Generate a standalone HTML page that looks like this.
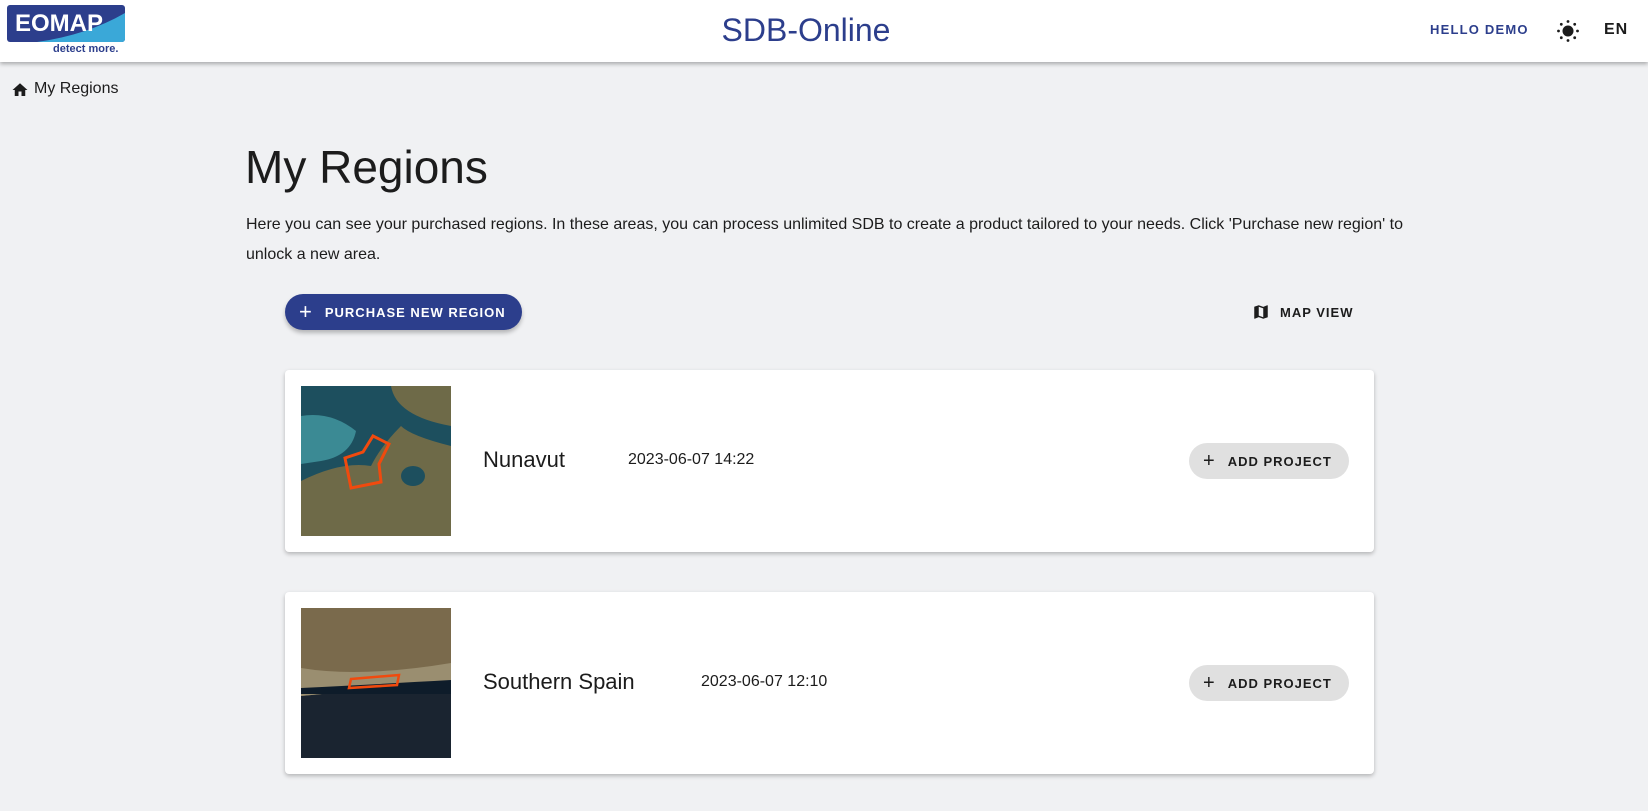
<!DOCTYPE html>
<html><head><meta charset="utf-8"><style>
*{box-sizing:border-box;margin:0;padding:0}
body{width:1648px;height:811px;overflow:hidden;background:#f0f1f3;font-family:"Liberation Sans",Roboto,sans-serif;color:#1c1c1c;position:relative}
.hdr{position:absolute;left:0;top:0;width:1648px;height:62px;background:#fff;box-shadow:0 2px 4px rgba(0,0,0,.3)}
.abs{position:absolute;white-space:nowrap}
.btn{position:absolute;border-radius:18px;font-weight:bold;font-size:13px;letter-spacing:1px;display:flex;align-items:center;white-space:nowrap}
.card{position:absolute;left:285px;width:1089px;height:182px;background:#fff;border-radius:4px;box-shadow:0 2px 4px rgba(0,0,0,.25)}
.add{background:#e0e0e0;color:#1c1c1c;left:904px;top:73px;width:160px;height:36px;padding-left:14px}
</style></head><body>
<div class="hdr">
 <div class="abs" style="left:7px;top:5px;width:118px;height:37px;background:#2c3e8c;border-radius:3px;overflow:hidden">
  <svg width="118" height="37" style="position:absolute;left:0;top:0"><path d="M30 37 Q80 30 118 8 L118 37Z" fill="#3aa8d8"/></svg>
  <div class="abs" style="left:8px;top:5px;color:#fff;font-weight:bold;font-size:24px;letter-spacing:0px;line-height:28px">EOMAP</div>
 </div>
 <div class="abs" style="left:53px;top:43px;font-size:11px;color:#2c3e8c;font-weight:bold">detect more.</div>
 <div class="abs" style="left:0;width:1612px;top:12px;text-align:center;font-size:32px;color:#2c3e8c">SDB-Online</div>
 <div class="abs" style="left:1430px;top:22px;font-size:13px;font-weight:bold;letter-spacing:1.2px;color:#2c3e8c">HELLO DEMO</div>
 <svg class="abs" style="left:1556px;top:19px" width="24" height="24" viewBox="0 0 24 24"><circle cx="12" cy="12" r="5.5" fill="#1c1c1c"/><g fill="#1c1c1c"><circle cx="12" cy="2.5" r="1.4"/><circle cx="12" cy="21.5" r="1.4"/><circle cx="2.5" cy="12" r="1.4"/><circle cx="21.5" cy="12" r="1.4"/><circle cx="5.3" cy="5.3" r="1.4"/><circle cx="18.7" cy="18.7" r="1.4"/><circle cx="5.3" cy="18.7" r="1.4"/><circle cx="18.7" cy="5.3" r="1.4"/></g></svg>
 <div class="abs" style="left:1604px;top:21px;font-size:16px;font-weight:bold;letter-spacing:1px">EN</div>
</div>
<svg class="abs" style="left:11px;top:81px" width="18" height="18" viewBox="0 0 24 24"><path d="M10 20v-6h4v6h5v-8h3L12 3 2 12h3v8z" fill="#1c1c1c"/></svg>
<div class="abs" style="left:34px;top:80px;font-size:16px">My Regions</div>
<div class="abs" style="left:245px;top:140px;font-size:46px">My Regions</div>
<div class="abs" style="left:246px;top:210px;width:1200px;font-size:16px;line-height:30px;white-space:normal">Here you can see your purchased regions. In these areas, you can process unlimited SDB to create a product tailored to your needs. Click 'Purchase new region' to unlock a new area.</div>
<div class="btn" style="left:285px;top:294px;width:237px;height:36px;background:#2c3e8c;color:#fff;padding-left:14px;box-shadow:0 3px 4px rgba(0,0,0,.25)"><span style="font-size:22px;font-weight:normal;margin-right:12px">+</span>PURCHASE NEW REGION</div>
<div class="btn" style="left:1252px;top:294px;height:36px"><svg width="18" height="18" viewBox="0 0 24 24" style="margin-right:10px"><path d="M20.5 3l-.16.03L15 5.1 9 3 3.36 4.9c-.21.07-.36.25-.36.48V20.5c0 .28.22.5.5.5l.16-.03L9 18.9l6 2.1 5.64-1.9c.21-.07.36-.25.36-.48V3.5c0-.28-.22-.5-.5-.5zM15 19l-6-2.11V5l6 2.11V19z" fill="#1c1c1c"/></svg>MAP VIEW</div>
<div class="card" style="top:370px">
 <svg class="abs" style="left:16px;top:16px" width="150" height="150" viewBox="0 0 150 150">
  <rect width="150" height="150" fill="#6e6a48"/>
  <path d="M0 0H90Q95 30 150 40V60Q110 50 100 40Q80 60 70 80Q40 75 0 95Z" fill="#1d4f5e"/>
  <path d="M0 30Q30 25 55 45Q50 70 20 75L0 78Z" fill="#3b8a94"/>
  <ellipse cx="112" cy="90" rx="12" ry="10" fill="#1d4f5e"/>
  <path d="M62 66L72 50L88 58L78 78L80 96L50 102L44 72Z" fill="none" stroke="#f04a0e" stroke-width="3"/>
 </svg>
 <div class="abs" style="left:198px;top:77px;font-size:22px">Nunavut</div>
 <div class="abs" style="left:343px;top:81px;font-size:16px">2023-06-07 14:22</div>
 <div class="btn add"><span style="font-size:20px;font-weight:normal;margin-right:12px">+</span>ADD PROJECT</div>
</div>
<div class="card" style="top:592px">
 <svg class="abs" style="left:16px;top:16px" width="150" height="150" viewBox="0 0 150 150">
  <rect width="150" height="150" fill="#1a2430"/>
  <path d="M0 0H150V75Q80 80 0 88Z" fill="#7a6a4c"/>
  <path d="M0 60Q60 70 150 55V75Q80 80 0 88Z" fill="#9a8e70"/>
  <path d="M0 80Q80 76 150 72V86H0Z" fill="#0e1c2a"/>
  <path d="M50 71L98 67L96 77L48 80Z" fill="none" stroke="#f04a0e" stroke-width="2.5"/>
 </svg>
 <div class="abs" style="left:198px;top:77px;font-size:22px">Southern Spain</div>
 <div class="abs" style="left:416px;top:81px;font-size:16px">2023-06-07 12:10</div>
 <div class="btn add"><span style="font-size:20px;font-weight:normal;margin-right:12px">+</span>ADD PROJECT</div>
</div>
</body></html>
